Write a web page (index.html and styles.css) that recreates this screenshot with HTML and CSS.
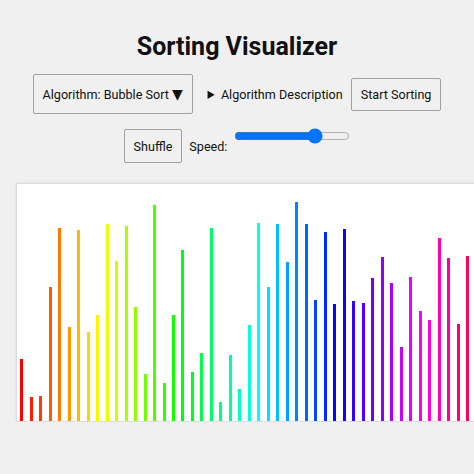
FILE: index.html
```html
<!DOCTYPE html>
<html lang="en">
<head>
  <meta charset="UTF-8">
  <meta name="viewport" content="width=device-width, initial-scale=1.0">
  <title>Sorting Visualizer</title>
  <link rel="stylesheet" href="styles.css">
</head>
<body>
<h1 class="title">Sorting Visualizer</h1>

<div class="controls">
  <button class="btn algo-btn" id="algo">Algorithm: Bubble Sort <span class="caret">▼</span></button>
  <details class="algo-info">
    <summary>Algorithm Description</summary>
    <p>Bubble Sort repeatedly swaps neighbouring bars that are out of order.</p>
  </details>
  <button class="btn" id="start">Start Sorting</button>
</div>

<div class="controls controls-second">
  <button class="btn" id="shuffle">Shuffle</button>
  <label class="speed-label" for="speed">Speed:</label>
  <input type="range" id="speed" class="speed" min="0" max="100" value="73">
</div>

<div class="chart" id="chart"></div>

<script>
var values = [62, 24, 25, 134, 193, 94, 191, 89, 106, 197,
              160, 195, 114, 47, 216, 38, 106, 171, 49, 68,
              193, 19, 66, 32, 96, 198, 134, 197, 159, 219,
              197, 121, 189, 117, 192, 120, 118, 143, 164, 138,
              74, 144, 110, 101, 183, 163, 97, 165, 128, 84];

function drawBars() {
  var chart = document.getElementById("chart");
  chart.innerHTML = "";
  for (var i = 0; i < values.length; i++) {
    var slot = document.createElement("div");
    slot.className = "slot";
    var bar = document.createElement("div");
    bar.className = "bar";
    bar.style.height = values[i] + "px";
    bar.style.background = "hsl(" + (i * 360 / values.length) + ", 100%, 50%)";
    slot.appendChild(bar);
    chart.appendChild(slot);
  }
}

document.getElementById("shuffle").addEventListener("click", function() {
  for (var i = values.length - 1; i > 0; i--) {
    var j = Math.floor(Math.random() * (i + 1));
    var t = values[i];
    values[i] = values[j];
    values[j] = t;
  }
  drawBars();
});

drawBars();
</script>
</body>
</html>
```

FILE: styles.css
```css
body {
  margin: 0;
  background-color: #f0f0f0;
  font-family: Roboto, "Liberation Sans", sans-serif;
  font-size: 12.6px;
  color: #111;
  overflow-x: hidden;
}

.title {
  text-align: center;
  font-size: 25px;
  font-weight: 700;
  margin: 32px 0 13px;
}

.controls {
  display: flex;
  justify-content: center;
  align-items: center;
  gap: 8px;
}

.controls-second {
  margin-top: 15px;
  gap: 7px;
}

.btn {
  font-family: inherit;
  font-size: 12.6px;
  color: #111;
  background-color: #f0f0f0;
  border: 1px solid #a0a0a0;
  border-radius: 2px;
  padding: 8px 9px;
  line-height: 15px;
}

.algo-btn {
  width: 160px;
  height: 40px;
  padding: 0 9px;
  white-space: nowrap;
}

.caret {
  font-family: "DejaVu Sans", sans-serif;
  font-size: 14px;
}

#shuffle {
  height: 34px;
}

.algo-info {
  margin-left: 7px;
}

.algo-info summary {
  cursor: pointer;
}

.algo-info p {
  display: none;
}

.speed {
  width: 116px;
  margin: -1px 0 0;
  align-self: flex-start;
}

.chart {
  display: flex;
  align-items: flex-end;
  margin: 20px 0 0 16px;
  width: 474px;
  height: 237px;
  background-color: #ffffff;
  border: 1px solid #dcdcdc;
  box-shadow: 0 0 3px rgba(0, 0, 0, 0.08);
}

.slot {
  flex: 1;
  display: flex;
  justify-content: center;
}

.bar {
  width: 3px;
}
```
